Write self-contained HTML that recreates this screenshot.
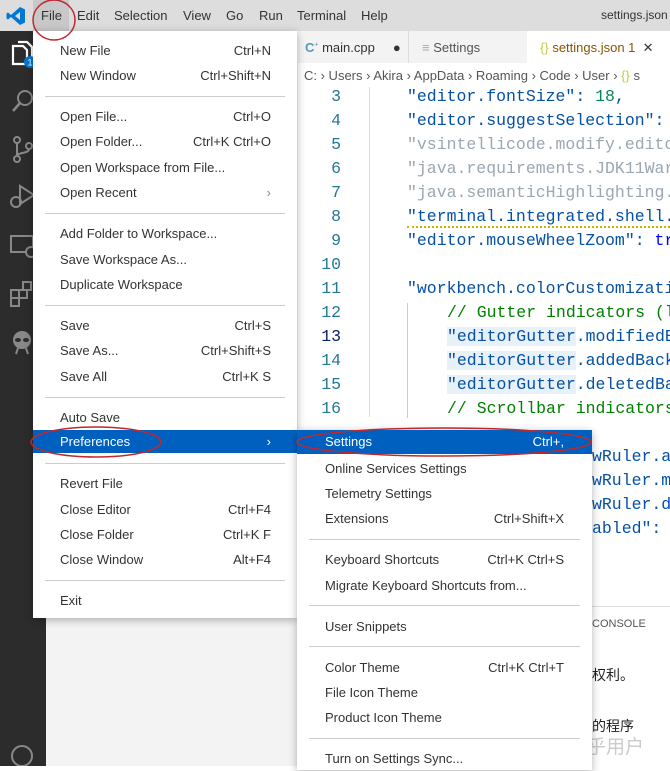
<!DOCTYPE html>
<html><head><meta charset="utf-8"><style>
*{margin:0;padding:0;box-sizing:border-box}
body{width:670px;height:766px;overflow:hidden;position:relative;background:#fff;font-family:"Liberation Sans","Noto Sans CJK SC",sans-serif;font-size:13px;color:#333}
.a{position:absolute}
.title{left:0;top:0;width:670px;height:31px;background:#dddddd}
.mi{position:absolute;top:8px;font-size:13px;color:#333}
.act{left:0;top:31px;width:46px;height:735px;background:#2c2c2c}
.side{left:46px;top:31px;width:252px;height:735px;background:#f3f3f3}
.tabs{left:298px;top:31px;width:372px;height:32px;background:#f3f3f3}
.crumb{left:298px;top:63px;width:372px;height:25px;background:#fff;font-size:13px;color:#555;padding:5px 0 0 6px;white-space:nowrap}
.ln{position:absolute;left:300px;width:41px;text-align:right;font-family:"Liberation Mono",monospace;font-size:16.5px;color:#237893}
.code{position:absolute;left:407px;font-family:"Liberation Mono",monospace;font-size:16.5px;color:#0451a5;white-space:nowrap}
.menu{background:#fff;box-shadow:0 2px 8px rgba(0,0,0,.3)}
.it{position:absolute;left:0;right:0;height:25px;line-height:25px;padding-left:27px;color:#333;white-space:nowrap}
.it span{position:absolute;right:26px}
.sep{position:absolute;left:12px;right:12px;height:1px;background:#ccc}
.hl{background:#0060c0;color:#fff}
</style></head><body>
<div class="a title"></div>
<svg class="a" style="left:6px;top:6px" width="20" height="20" viewBox="0 0 20 20"><path d="M14 1 L19 3.5 V16.5 L14 19 L5 11 L2 13.5 L0.5 12.5 V7.5 L2 6.5 L5 9 Z M14 6 L9 10 L14 14 Z" fill="#0078d4" fill-rule="evenodd"/></svg>
<div class="a" style="left:33px;top:0;width:36px;height:31px;background:#c8c8c8"></div>
<div class="mi" style="left:41px">File</div>
<div class="mi" style="left:77px">Edit</div>
<div class="mi" style="left:114px">Selection</div>
<div class="mi" style="left:183px">View</div>
<div class="mi" style="left:226px">Go</div>
<div class="mi" style="left:259px">Run</div>
<div class="mi" style="left:297px">Terminal</div>
<div class="mi" style="left:361px">Help</div>
<div class="mi" style="left:601px;font-size:12px">settings.json</div>

<div class="a act"></div>
<svg class="a" style="left:9px;top:40px" width="28" height="28" viewBox="0 0 28 28"><path d="M4 6h10l4 4v14H4z" fill="none" stroke="#fff" stroke-width="2.2"/><path d="M9 2h9l5 5v12" fill="none" stroke="#fff" stroke-width="2.2"/><circle cx="21" cy="22" r="6" fill="#0078d4"/><text x="21" y="25.5" font-size="9" fill="#fff" text-anchor="middle" font-family="Liberation Sans">1</text></svg>
<svg class="a" style="left:10px;top:88px" width="26" height="26"><circle cx="15" cy="10" r="7" fill="none" stroke="#888" stroke-width="2"/><path d="M10 15 L3 23" stroke="#888" stroke-width="2.5"/></svg>
<svg class="a" style="left:10px;top:135px" width="26" height="30"><circle cx="7" cy="5" r="3" fill="none" stroke="#888" stroke-width="2"/><circle cx="7" cy="24" r="3" fill="none" stroke="#888" stroke-width="2"/><circle cx="19" cy="11" r="3" fill="none" stroke="#888" stroke-width="2"/><path d="M7 8v13M19 14c0 5-12 3-12 7" stroke="#888" stroke-width="2" fill="none"/></svg>
<svg class="a" style="left:8px;top:182px" width="30" height="30"><path d="M12 4 L26 13 L12 22Z" fill="none" stroke="#888" stroke-width="2"/><circle cx="8" cy="20" r="5" fill="none" stroke="#888" stroke-width="2"/></svg>
<svg class="a" style="left:9px;top:232px" width="30" height="30"><rect x="2" y="4" width="22" height="16" fill="none" stroke="#888" stroke-width="2"/><circle cx="22" cy="20" r="5" fill="#2c2c2c" stroke="#888" stroke-width="2"/></svg>
<svg class="a" style="left:9px;top:280px" width="30" height="30"><rect x="2" y="10" width="8" height="8" fill="none" stroke="#888" stroke-width="2"/><rect x="10" y="10" width="8" height="8" fill="none" stroke="#888" stroke-width="2"/><rect x="2" y="18" width="8" height="8" fill="none" stroke="#888" stroke-width="2"/><rect x="14" y="2" width="8" height="8" fill="none" stroke="#888" stroke-width="2"/></svg>
<svg class="a" style="left:9px;top:328px" width="28" height="28"><ellipse cx="13" cy="12" rx="9" ry="9" fill="#888"/><ellipse cx="9" cy="12" rx="3" ry="2" fill="#2c2c2c"/><ellipse cx="17" cy="12" rx="3" ry="2" fill="#2c2c2c"/><path d="M9 20 L7 26 M17 20 L19 26" stroke="#888" stroke-width="2"/></svg>
<svg class="a" style="left:10px;top:744px" width="26" height="22"><circle cx="12" cy="12" r="10" fill="none" stroke="#888" stroke-width="2"/></svg>

<div class="a side"></div>
<div class="a tabs"></div>
<div class="a" style="left:305px;top:40px;font-size:13px;color:#333"><span style="color:#519aba;font-weight:bold">C</span><sup style="color:#519aba;font-size:7px">+</sup> main.cpp &nbsp;&nbsp;&nbsp;&nbsp;●</div>
<div class="a" style="left:408px;top:31px;width:1px;height:32px;background:#ddd"></div>
<div class="a" style="left:422px;top:40px;color:#555"><span style="color:#aaa">≡</span> Settings</div>
<div class="a" style="left:527px;top:31px;width:143px;height:32px;background:#fff"></div>
<div class="a" style="left:540px;top:40px;color:#333;white-space:nowrap"><span style="color:#cbcb41">{}</span> <span style="color:#895503">settings.json 1</span> &nbsp;✕</div>
<div class="a crumb">C: › Users › Akira › AppData › Roaming › Code › User › <span style="color:#cbcb41">{}</span> s</div>

<div class="ln" style="top:87px">3</div><div class="code" style="top:87px">"editor.fontSize": <span style="color:#098658">18</span>,</div>
<div class="ln" style="top:111px">4</div><div class="code" style="top:111px">"editor.suggestSelection":</div>
<div class="ln" style="top:135px">5</div><div class="code" style="top:135px;color:#9aa7b4">"vsintellicode.modify.edito</div>
<div class="ln" style="top:159px">6</div><div class="code" style="top:159px;color:#9aa7b4">"java.requirements.JDK11War</div>
<div class="ln" style="top:183px">7</div><div class="code" style="top:183px;color:#9aa7b4">"java.semanticHighlighting.</div>
<div class="ln" style="top:207px">8</div><div class="code" style="top:207px;border-bottom:2px dotted #d6b000">"terminal.integrated.shell.</div>
<div class="ln" style="top:231px">9</div><div class="code" style="top:231px">"editor.mouseWheelZoom": <span style="color:#0000ff">tr</span></div>
<div class="ln" style="top:255px">10</div>
<div class="ln" style="top:279px">11</div><div class="code" style="top:279px">"workbench.colorCustomizati</div>
<div class="ln" style="top:303px">12</div><div class="code" style="top:303px;left:447px;color:#008000">// Gutter indicators (l</div>
<div class="ln" style="top:327px;color:#0b216f">13</div><div class="code" style="top:327px;left:447px"><span style="background:#e8f0f8">"editorGutter</span>.modifiedE</div>
<div class="ln" style="top:351px">14</div><div class="code" style="top:351px;left:447px"><span style="background:#e8f0f8">"editorGutter</span>.addedBack</div>
<div class="ln" style="top:375px">15</div><div class="code" style="top:375px;left:447px"><span style="background:#e8f0f8">"editorGutter</span>.deletedBa</div>
<div class="ln" style="top:399px">16</div><div class="code" style="top:399px;left:447px;color:#008000">// Scrollbar indicators</div>
<div class="code" style="top:447px;left:592px">wRuler.ac</div>
<div class="code" style="top:471px;left:592px">wRuler.mo</div>
<div class="code" style="top:495px;left:592px">wRuler.de</div>
<div class="code" style="top:519px;left:592px">abled": <span style="color:#0000ff">f</span></div>
<div class="a" style="left:369px;top:87px;width:1px;height:330px;background:#ddd"></div>
<div class="a" style="left:407px;top:303px;width:1px;height:115px;background:#ccc"></div>
<div class="a" style="left:592px;top:606px;width:78px;height:1px;background:#ddd"></div>
<div class="a" style="left:592px;top:618px;font-size:11px;color:#555">CONSOLE</div>
<div class="a" style="left:592px;top:665px;font-size:14px;color:#222">权利。</div>
<div class="a" style="left:592px;top:716px;font-size:14px;color:#222">的程序</div>
<div class="a" style="left:568px;top:732px;font-size:19px;color:rgba(160,160,160,.55)">知乎用户</div>

<div class="a menu" style="left:33px;top:31px;width:264px;height:587px">
<div class="it" style="top:7px">New File<span>Ctrl+N</span></div>
<div class="it" style="top:32px">New Window<span>Ctrl+Shift+N</span></div>
<div class="sep" style="top:65px"></div>
<div class="it" style="top:73px">Open File...<span>Ctrl+O</span></div>
<div class="it" style="top:98px">Open Folder...<span>Ctrl+K Ctrl+O</span></div>
<div class="it" style="top:124px">Open Workspace from File...</div>
<div class="it" style="top:149px">Open Recent<span style="color:#888">›</span></div>
<div class="sep" style="top:182px"></div>
<div class="it" style="top:190px">Add Folder to Workspace...</div>
<div class="it" style="top:216px">Save Workspace As...</div>
<div class="it" style="top:241px">Duplicate Workspace</div>
<div class="sep" style="top:274px"></div>
<div class="it" style="top:282px">Save<span>Ctrl+S</span></div>
<div class="it" style="top:307px">Save As...<span>Ctrl+Shift+S</span></div>
<div class="it" style="top:333px">Save All<span>Ctrl+K S</span></div>
<div class="sep" style="top:366px"></div>
<div class="it" style="top:374px">Auto Save</div>
<div class="it hl" style="top:399px;height:23px;line-height:23px">Preferences<span style="color:#fff">›</span></div>
<div class="sep" style="top:432px"></div>
<div class="it" style="top:440px">Revert File</div>
<div class="it" style="top:466px">Close Editor<span>Ctrl+F4</span></div>
<div class="it" style="top:491px">Close Folder<span>Ctrl+K F</span></div>
<div class="it" style="top:516px">Close Window<span>Alt+F4</span></div>
<div class="sep" style="top:549px"></div>
<div class="it" style="top:557px">Exit</div>
</div>

<div class="a menu" style="left:297px;top:430px;width:295px;height:340px">
<div class="it hl" style="top:0;height:24px;line-height:24px;padding-left:28px">Settings<span style="color:#fff;right:28px">Ctrl+,</span></div>
<div class="it" style="top:26px;padding-left:28px">Online Services Settings</div>
<div class="it" style="top:51px;padding-left:28px">Telemetry Settings</div>
<div class="it" style="top:76px;padding-left:28px">Extensions<span style="right:28px">Ctrl+Shift+X</span></div>
<div class="sep" style="top:109px"></div>
<div class="it" style="top:117px;padding-left:28px">Keyboard Shortcuts<span style="right:28px">Ctrl+K Ctrl+S</span></div>
<div class="it" style="top:143px;padding-left:28px">Migrate Keyboard Shortcuts from...</div>
<div class="sep" style="top:175px"></div>
<div class="it" style="top:184px;padding-left:28px">User Snippets</div>
<div class="sep" style="top:216px"></div>
<div class="it" style="top:225px;padding-left:28px">Color Theme<span style="right:28px">Ctrl+K Ctrl+T</span></div>
<div class="it" style="top:250px;padding-left:28px">File Icon Theme</div>
<div class="it" style="top:275px;padding-left:28px">Product Icon Theme</div>
<div class="sep" style="top:308px"></div>
<div class="it" style="top:316px;padding-left:28px">Turn on Settings Sync...</div>
</div>

<svg class="a" style="left:0;top:0" width="670" height="766">
<ellipse cx="54" cy="20" rx="21" ry="20" fill="none" stroke="#c0282f" stroke-width="1.5"/>
<ellipse cx="96" cy="442" rx="65" ry="15" fill="none" stroke="#c0282f" stroke-width="1.5"/>
<ellipse cx="444" cy="442" rx="147" ry="14" fill="none" stroke="#c0282f" stroke-width="1.5"/>
</svg>
</body></html>
